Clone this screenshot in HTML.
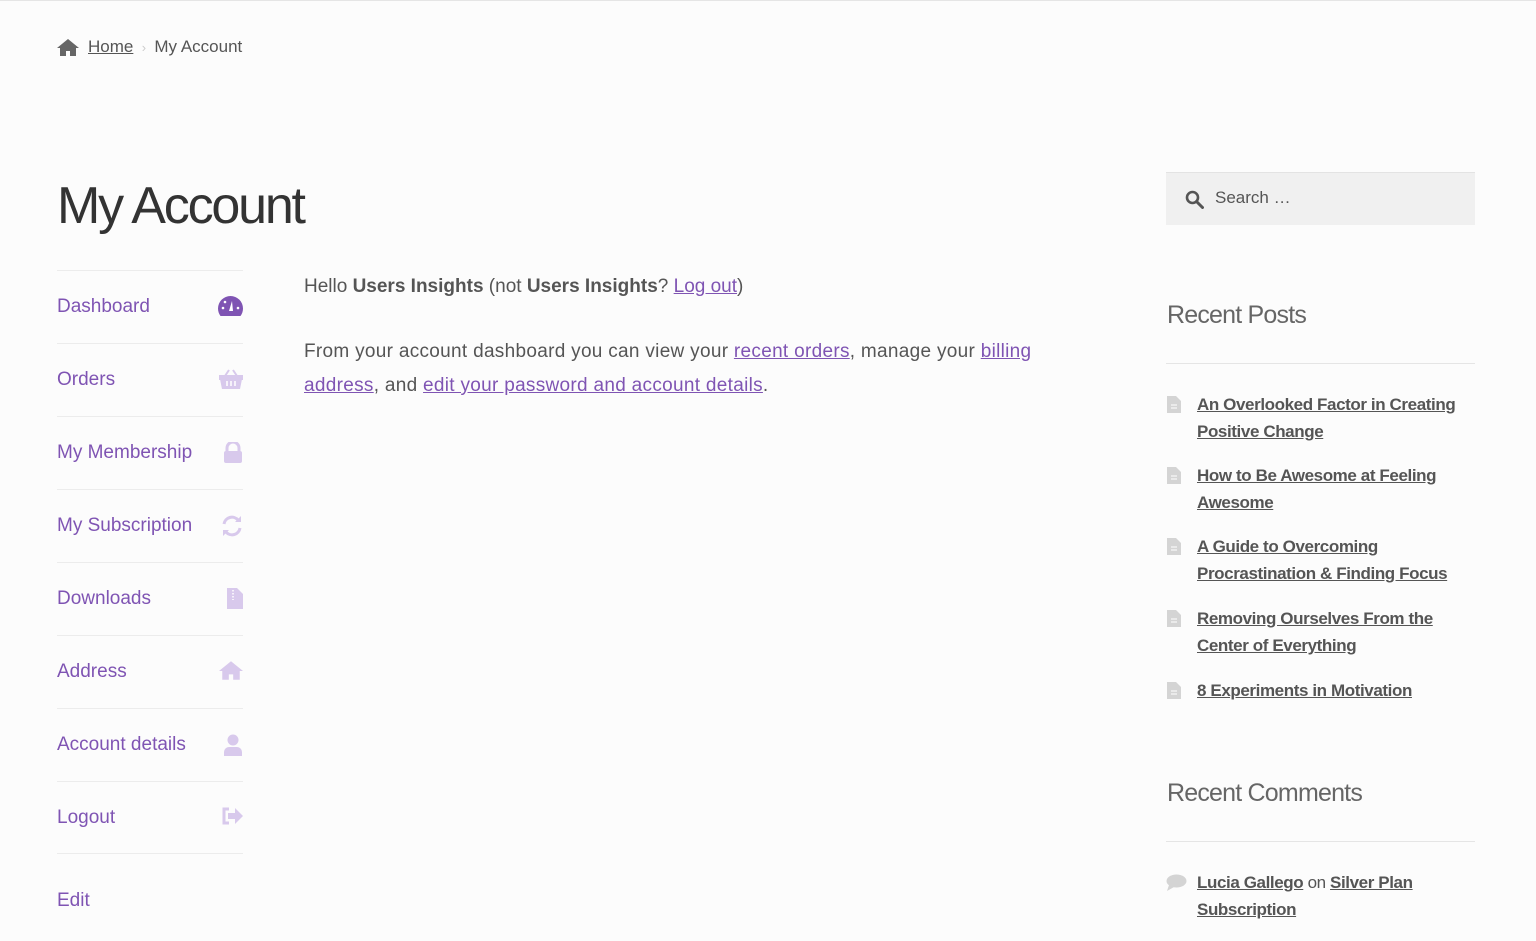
<!DOCTYPE html>
<html><head><meta charset="utf-8"><style>
*{margin:0;padding:0;box-sizing:border-box}
body{width:1536px;height:941px;overflow:hidden;background:#fcfcfc;font-family:"Liberation Sans",sans-serif;color:#6d6d6d;position:relative}
.a{position:absolute;white-space:nowrap}
a{color:inherit}
.p{color:#7f54b3}
.nav{position:absolute;left:57px;width:186px;height:73px;border-top:1px solid #ececec;font-size:19px;color:#7f54b3;line-height:72px}
.nav svg{position:absolute;right:0;top:25px}
.w{position:absolute;left:1197px;font-size:17px;font-weight:bold;color:#555;line-height:27px;width:275px;letter-spacing:-0.4px}
.w a{color:#555}
.doc{position:absolute;left:1167px}
</style></head><body>
<div style="position:absolute;left:0;top:0;width:1536px;height:1px;background:#e5e5e5"></div>
<svg class="a" style="left:57px;top:39px" width="22" height="17" viewBox="0 0 22 17"><path d="M11 0L0 9h3v8h6v-5h4v5h6V9h3z" fill="#666"/></svg>
<div class="a" style="left:88px;top:37px;font-size:17px;color:#555"><a href="#" style="color:#555">Home</a> <span style="color:#ccc;font-size:13px">&nbsp;›&nbsp;</span> My Account</div>
<div class="a" style="left:57px;top:176px;font-size:52px;color:#333;letter-spacing:-2.2px;font-weight:300">My Account</div>

<div class="nav" style="top:270px">Dashboard<svg width="25" height="20" viewBox="0 0 25 20"><path d="M12.5 0A12.5 12.5 0 0 0 0 12.5c0 3 1 5.5 2.5 7.5h20c1.5-2 2.5-4.5 2.5-7.5A12.5 12.5 0 0 0 12.5 0z" fill="#7f54b3"/><path d="M11 15l3-10 1 10z" fill="#fff"/><circle cx="5" cy="12" r="1.3" fill="#fff"/><circle cx="20" cy="12" r="1.3" fill="#fff"/><circle cx="7" cy="6" r="1.3" fill="#fff"/></svg></div>
<div class="nav" style="top:343px">Orders<svg width="24" height="20" viewBox="0 0 24 20"><path d="M0 7h24v3h-2l-2 10H4L2 10H0zM6 7l4-6M18 7l-4-6" stroke="#d8c9ec" stroke-width="2" fill="#d8c9ec"/><path d="M8 12v5M12 12v5M16 12v5" stroke="#fff" stroke-width="1.5"/></svg></div>
<div class="nav" style="top:416px">My Membership<svg width="20" height="21" viewBox="0 0 20 21"><path d="M4 9V6a6 6 0 0 1 12 0v3" stroke="#d8c9ec" stroke-width="3" fill="none"/><rect x="1" y="9" width="18" height="12" rx="2" fill="#d8c9ec"/></svg></div>
<div class="nav" style="top:489px">My Subscription<svg width="22" height="22" viewBox="0 0 22 22"><path d="M3 9a8 8 0 0 1 14-4M19 13a8 8 0 0 1-14 4" stroke="#d8c9ec" stroke-width="3" fill="none"/><path d="M14 7h6V1zM8 15H2v6z" fill="#d8c9ec"/></svg></div>
<div class="nav" style="top:562px">Downloads<svg width="16" height="21" viewBox="0 0 16 21"><path d="M0 0h10l6 6v15H0z" fill="#d8c9ec"/><path d="M6 2v10" stroke="#fff" stroke-width="1.5" stroke-dasharray="1.5 1.5"/></svg></div>
<div class="nav" style="top:635px">Address<svg width="24" height="19" viewBox="0 0 22 17"><path d="M11 0L0 9h3v8h6v-5h4v5h6V9h3z" fill="#d8c9ec"/></svg></div>
<div class="nav" style="top:708px">Account details<svg width="20" height="22" viewBox="0 0 20 22"><circle cx="10" cy="6" r="5.5" fill="#d8c9ec"/><path d="M1 22v-4a5 5 0 0 1 5-5h8a5 5 0 0 1 5 5v4z" fill="#d8c9ec"/></svg></div>
<div class="nav" style="top:781px;border-bottom:1px solid #ececec">Logout<svg width="22" height="18" viewBox="0 0 22 18"><path d="M8 2H3v14h5" stroke="#d8c9ec" stroke-width="3" fill="none"/><path d="M7 6h7V1l8 8-8 8v-5H7z" fill="#d8c9ec"/></svg></div>
<div class="a p" style="left:57px;top:890px;font-size:19px">Edit</div>

<div class="a" style="left:304px;top:276px;font-size:19px;color:#555">Hello <b>Users Insights</b> (not <b>Users Insights</b>? <a href="#" class="p">Log out</a>)</div>
<div class="a" style="left:304px;top:335px;font-size:19px;color:#555;line-height:34px;letter-spacing:0.3px">From your account dashboard you can view your <a href="#" class="p">recent orders</a>, manage your <a href="#" class="p">billing</a><br><a href="#" class="p">address</a>, and <a href="#" class="p">edit your password and account details</a>.</div>

<div class="a" style="left:1166px;top:172px;width:309px;height:53px;background:#f0f0f0;border-top:1px solid #e3e3e3"></div>
<svg class="a" style="left:1185px;top:190px" width="19" height="19" viewBox="0 0 19 19"><circle cx="7.5" cy="7.5" r="5.5" stroke="#555" stroke-width="2.6" fill="none"/><path d="M11.5 11.5l6 6" stroke="#555" stroke-width="3" stroke-linecap="round"/></svg>
<div class="a" style="left:1215px;top:188px;font-size:17px;color:#555">Search …</div>

<div class="a" style="left:1167px;top:301px;font-size:25px;color:#666;font-weight:300;letter-spacing:-0.8px">Recent Posts</div>
<div class="a" style="left:1166px;top:363px;width:309px;height:1px;background:#e5e5e5"></div>
<svg class="doc" style="top:396px" width="14" height="17" viewBox="0 0 14 17"><path d="M0 0h9l5 5v12H0z" fill="#d4d4d4"/><path d="M4 9h6M4 12h6" stroke="#fff"/></svg><div class="w" style="top:391px"><a href="#">An Overlooked Factor in Creating Positive Change</a></div>
<svg class="doc" style="top:467px" width="14" height="17" viewBox="0 0 14 17"><path d="M0 0h9l5 5v12H0z" fill="#d4d4d4"/><path d="M4 9h6M4 12h6" stroke="#fff"/></svg><div class="w" style="top:462px"><a href="#">How to Be Awesome at Feeling Awesome</a></div>
<svg class="doc" style="top:538px" width="14" height="17" viewBox="0 0 14 17"><path d="M0 0h9l5 5v12H0z" fill="#d4d4d4"/><path d="M4 9h6M4 12h6" stroke="#fff"/></svg><div class="w" style="top:533px"><a href="#">A Guide to Overcoming Procrastination &amp; Finding Focus</a></div>
<svg class="doc" style="top:610px" width="14" height="17" viewBox="0 0 14 17"><path d="M0 0h9l5 5v12H0z" fill="#d4d4d4"/><path d="M4 9h6M4 12h6" stroke="#fff"/></svg><div class="w" style="top:605px"><a href="#">Removing Ourselves From the Center of Everything</a></div>
<svg class="doc" style="top:682px" width="14" height="17" viewBox="0 0 14 17"><path d="M0 0h9l5 5v12H0z" fill="#d4d4d4"/><path d="M4 9h6M4 12h6" stroke="#fff"/></svg><div class="w" style="top:677px"><a href="#">8 Experiments in Motivation</a></div>

<div class="a" style="left:1167px;top:779px;font-size:25px;color:#666;font-weight:300;letter-spacing:-0.8px">Recent Comments</div>
<div class="a" style="left:1166px;top:841px;width:309px;height:1px;background:#e5e5e5"></div>
<svg class="a" style="left:1166px;top:874px" width="21" height="17" viewBox="0 0 21 17"><ellipse cx="10.5" cy="7" rx="10" ry="6.5" fill="#d4d4d4"/><path d="M3 11l-2 6 7-4z" fill="#d4d4d4"/></svg>
<div class="w" style="top:869px;white-space:normal"><a href="#">Lucia Gallego</a> <span style="font-weight:normal">on</span> <a href="#">Silver Plan Subscription</a></div>
</body></html>
